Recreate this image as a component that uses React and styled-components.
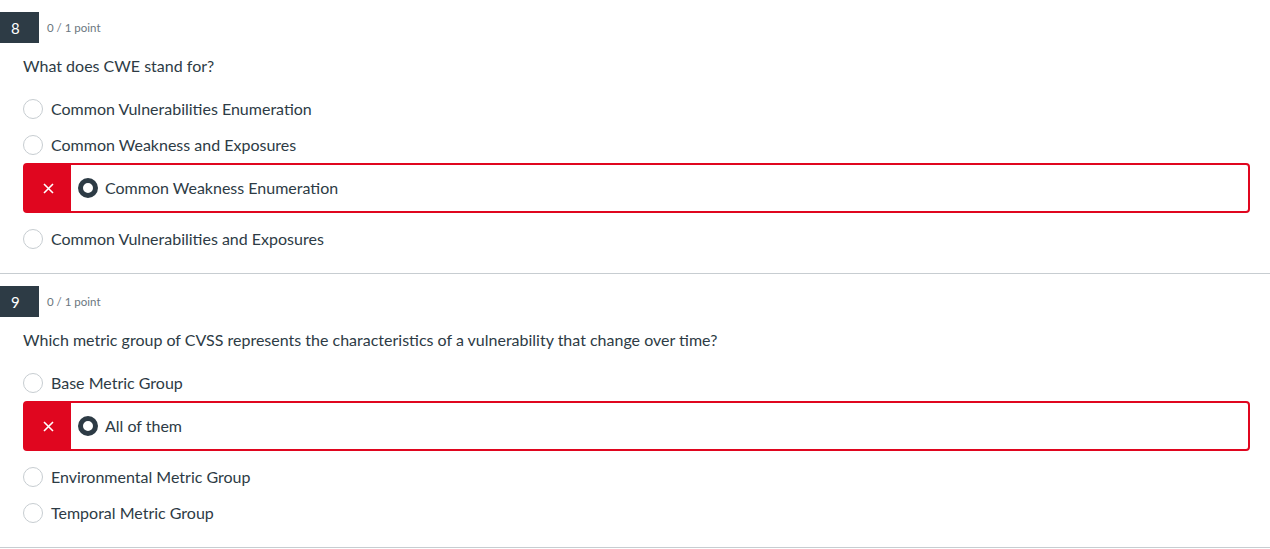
import styled, { createGlobalStyle } from "styled-components";

const GlobalStyle = createGlobalStyle`
  body {
    margin: 0;
    background: #fff;
    font-family: Lato, "Liberation Sans", sans-serif;
    color: #2d3b45;
  }
`;

const Quiz = styled.div`
  width: 1270px;
`;

const Question = styled.section`
  padding: 12px 0 16px;
  border-bottom: 1px solid #c7cdd1;
`;

const Header = styled.div`
  display: flex;
  align-items: center;
  gap: 8px;
`;

const Number = styled.div`
  width: 39px;
  height: 31px;
  background: #2d3b45;
  color: #fff;
  font-size: 15px;
  display: flex;
  align-items: center;
  padding-left: 11px;
  box-sizing: border-box;
`;

const Points = styled.span`
  font-size: 11.5px;
  color: #6b7780;
`;

const Prompt = styled.p`
  margin: 0;
  padding: 13px 23px 0;
  font-size: 16px;
  line-height: 20px;
  height: 35px;
`;

const Options = styled.div`
  display: flex;
  flex-direction: column;
  padding: 0 20px 0 23px;
`;

const Option = styled.label`
  display: flex;
  align-items: center;
  height: 36px;
  font-size: 16px;
  gap: 8px;
`;

const Label = styled.span`
  margin-bottom: 2px;
  margin-left: ${(p) => (p.wrong ? "7px" : "0")};
`;

const Radio = styled.span`
  width: 20px;
  height: 20px;
  border-radius: 50%;
  box-sizing: border-box;
  flex: none;
  border: ${(p) => (p.checked ? "5px solid #2d3b45" : "1px solid #c7cdd1")};
  background: #fff;
`;

const Wrong = styled.div`
  display: flex;
  align-items: center;
  height: 50px;
  box-sizing: border-box;
  border: 2px solid #e0061f;
  border-radius: 4px;
  margin-bottom: 8px;
  font-size: 16px;
`;

const Flag = styled.div`
  width: 46px;
  align-self: stretch;
  background: #e0061f;
  display: flex;
  align-items: center;
  justify-content: center;
  margin-right: 7px;
`;

const Cross = () => (
  <svg width="11" height="11" viewBox="0 0 11 11">
    <path d="M1 1L10 10M10 1L1 10" stroke="#fff" strokeWidth="1.6" />
  </svg>
);

const questions = [
  {
    n: 8,
    text: "What does CWE stand for?",
    answers: [
      "Common Vulnerabilities Enumeration",
      "Common Weakness and Exposures",
      "Common Weakness Enumeration",
      "Common Vulnerabilities and Exposures",
    ],
    chosen: 2,
  },
  {
    n: 9,
    text: "Which metric group of CVSS represents the characteristics of a vulnerability that change over time?",
    answers: [
      "Base Metric Group",
      "All of them",
      "Environmental Metric Group",
      "Temporal Metric Group",
    ],
    chosen: 1,
  },
];

export default function App() {
  return (
    <Quiz>
      <GlobalStyle />
      {questions.map((q) => (
        <Question key={q.n}>
          <Header>
            <Number>{q.n}</Number>
            <Points>0 / 1 point</Points>
          </Header>
          <Prompt>{q.text}</Prompt>
          <Options>
            {q.answers.map((a, i) =>
              i === q.chosen ? (
                <Wrong key={a}>
                  <Flag>
                    <Cross />
                  </Flag>
                  <Radio checked />
                  <Label wrong>{a}</Label>
                </Wrong>
              ) : (
                <Option key={a}>
                  <Radio />
                  <Label>{a}</Label>
                </Option>
              )
            )}
          </Options>
        </Question>
      ))}
    </Quiz>
  );
}
